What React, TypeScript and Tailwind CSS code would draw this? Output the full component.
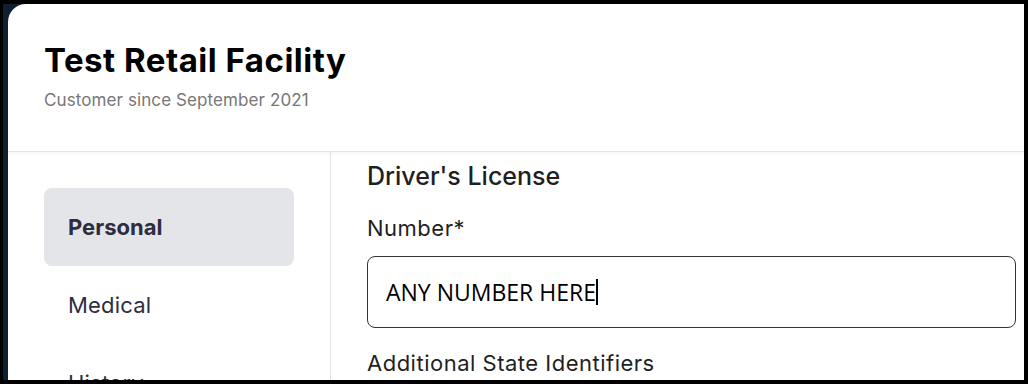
import { useState } from "react";

const tabs = ["Personal", "Medical", "History"];

const App = () => {
  const [active, setActive] = useState<string>("Personal");

  return (
    <div
      className="w-[1028px] h-[384px] bg-black pt-1 pr-1 pb-1 pl-[3px] overflow-hidden"
      style={{ fontFamily: "Inter, 'Noto Sans', sans-serif" }}
    >
      <div className="h-full bg-[#0f1f30] pl-[5px]">
        <div className="h-full bg-white rounded-tl-[18px] flex flex-col overflow-hidden">
          <div className="h-[148px] shrink-0 px-9 pt-9 border-b border-[#e6e6e6] shadow-[0_2px_4px_rgba(0,0,0,0.04)] relative z-10">
            <h1 className="text-[33px] leading-10 font-bold text-black tracking-[0.5px]">
              Test Retail Facility
            </h1>
            <p className="mt-2 text-[17px] leading-6 text-[#777777] tracking-[0.1px]">
              Customer since September 2021
            </p>
          </div>
          <div className="flex flex-1 min-h-0">
            <div className="w-[323px] shrink-0 border-r border-[#e3e3e3] px-9 pt-9">
              {tabs.map((tab) => (
                <div
                  key={tab}
                  onClick={() => setActive(tab)}
                  className={
                    tab === active
                      ? "h-[78px] flex items-center px-6 rounded-lg bg-[#e4e5e8] text-[22px] font-bold text-[#2d2d3f] cursor-pointer"
                      : "h-[78px] flex items-center px-6 rounded-lg text-[22px] text-[#2d2d3f] tracking-[0.2px] cursor-pointer"
                  }
                >
                  {tab}
                </div>
              ))}
            </div>
            <div className="flex-1 pl-9 pr-2 pt-2">
              <h2 className="text-[25px] leading-8 font-medium text-[#1f1f1f]">
                Driver's License
              </h2>
              <label className="block mt-5 text-[22px] leading-8 text-[#1f1f1f] tracking-[0.5px]">
                Number*
              </label>
              <div className="mt-3 h-[72px] rounded-lg border border-[#333333] px-[18px] flex items-center">
                <span
                  className="text-[23px] text-black"
                  style={{ fontFamily: "'Open Sans', sans-serif" }}
                >
                  ANY NUMBER HERE
                </span>
                <span className="w-[2px] h-[26px] bg-black" />
              </div>
              <label className="block mt-[19px] text-[22px] leading-8 text-[#1f1f1f] tracking-[0.5px]">
                Additional State Identifiers
              </label>
            </div>
          </div>
        </div>
      </div>
    </div>
  );
};

export default App;
